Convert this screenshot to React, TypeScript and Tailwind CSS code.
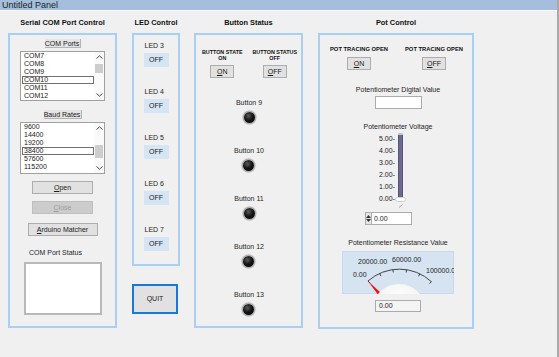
import React from "react";

function Chevron({ up }: { up?: boolean }) {
  return (
    <svg width="7" height="4" viewBox="0 0 7 4">
      <polyline
        points={up ? "0.5,3.5 3.5,0.8 6.5,3.5" : "0.5,0.5 3.5,3.2 6.5,0.5"}
        fill="none"
        stroke="#4a4a4a"
        strokeWidth="1"
      />
    </svg>
  );
}

function ListBox({
  items,
  focus,
  thumb,
  className,
}: {
  items: string[];
  focus: number;
  thumb: string;
  className: string;
}) {
  return (
    <div className={`flex bg-white border border-[#a0a0a0] ${className}`}>
      <div className="flex-1 flex flex-col pl-[1px]">
        {items.map((t, i) => (
          <div
            key={t}
            className={`h-[8px] leading-[8px] text-[7px] pl-[2px] ${
              i === focus ? "shadow-[inset_0_0_0_1px_#707070]" : ""
            }`}
          >
            {t}
          </div>
        ))}
      </div>
      <div className="w-[10px] flex flex-col items-center bg-[#fafafa]">
        <div className="h-[10px] flex items-center">
          <Chevron up />
        </div>
        <div className={`w-[8px] bg-[#cdcdcd] ${thumb}`} />
        <div className="flex-1" />
        <div className="h-[10px] flex items-center">
          <Chevron />
        </div>
      </div>
    </div>
  );
}

function Tag({ children, className }: { children: React.ReactNode; className: string }) {
  return (
    <div
      className={`h-[9px] leading-[9px] text-[7px] text-center whitespace-nowrap bg-[#e4e4e4] border-b border-r border-[#b4b4b4] ${className}`}
    >
      {children}
    </div>
  );
}

function Btn({
  children,
  className,
  disabled,
}: {
  children: React.ReactNode;
  className: string;
  disabled?: boolean;
}) {
  return (
    <div
      className={`flex items-center justify-center text-[7px] leading-none border whitespace-nowrap ${
        disabled
          ? "bg-[#cccccc] border-[#bfbfbf] text-[#9c9c9c]"
          : "bg-[#e1e1e1] border-[#adadad] text-[#1a1a1a]"
      } ${className}`}
    >
      {children}
    </div>
  );
}

function Led() {
  return (
    <div className="w-[11px] h-[11px] rounded-full bg-[radial-gradient(circle_at_40%_35%,#5a5a5a_0%,#151515_45%,#000_100%)] shadow-[0_0_1px_1.5px_#a8a8a8]" />
  );
}

function Header({ children }: { children: React.ReactNode }) {
  return (
    <div className="h-[10px] leading-[10px] text-[7.4px] font-bold text-center whitespace-nowrap text-[#111]">
      {children}
    </div>
  );
}

function Gauge() {
  const cx = 57.5;
  const cy = 65.3;
  const ticks = [-41.7, -24.9, -8.1, 8.7, 25.5, 42.6].map((d) => {
    const a = (d * Math.PI) / 180;
    return {
      x1: cx + 47.3 * Math.sin(a),
      y1: cy - 47.3 * Math.cos(a),
      x2: cx + 44.3 * Math.sin(a),
      y2: cy - 44.3 * Math.cos(a),
    };
  });
  return (
    <svg width="112" height="43" viewBox="0 0 112 43" className="block mt-[3px]">
      <defs>
        <radialGradient id="hub" cx="50%" cy="30%" r="70%">
          <stop offset="0%" stopColor="#ffffff" />
          <stop offset="100%" stopColor="#ececec" />
        </radialGradient>
      </defs>
      <rect x="0.5" y="0.5" width="111" height="42" fill="#d6e4f1" stroke="#c7d9ea" />
      <g fontFamily="Liberation Sans, Arial, sans-serif" fontSize="7" fill="#222">
        <text x="11" y="26">0.00</text>
        <text x="16" y="12.5">20000.00</text>
        <text x="50" y="11">60000.00</text>
        <text x="84" y="21.5">100000.0</text>
      </g>
      <path d="M26 30 A47.3 47.3 0 0 1 89.3 30.6" fill="none" stroke="#444" strokeWidth="1" />
      {ticks.map((t, i) => (
        <line key={i} x1={t.x1} y1={t.y1} x2={t.x2} y2={t.y2} stroke="#444" strokeWidth="1" />
      ))}
      <polygon points="25.5,29.5 38.7,41.8 36.3,44" fill="#ee1111" />
      <circle cx="57" cy="60" r="27" fill="url(#hub)" />
    </svg>
  );
}

export default function App() {
  const label = "text-[7px] leading-[10px] h-[10px] whitespace-nowrap text-[#1e1e1e]";
  return (
    <div className="w-[559px] h-[357px] bg-[#f0f0f0] overflow-hidden border-r-2 border-[#a9a9a9] font-['Liberation_Sans',Arial,sans-serif] text-[#1a1a1a]">
      <div className="h-[10px] bg-[#a4bedb] text-[9px] leading-[10px] pl-[2px] text-[#1e1e1e]">
        Untitled Panel
      </div>
      <div className="h-[1px] bg-[#f8f8f8]" />
      <div className="flex items-start pl-[8px] pt-[7px]">
        {/* Serial COM Port Control */}
        <div className="w-[109px] flex flex-col">
          <Header>Serial COM Port Control</Header>
          <div className="mt-[5px] h-[295px] border-2 border-[#a9d0f2] flex flex-col items-center">
            <Tag className="mt-[4px] w-[36px]">COM Ports</Tag>
            <ListBox
              className="mt-[3px] w-[85px] h-[50px]"
              items={["COM7", "COM8", "COM9", "COM10", "COM11", "COM12"]}
              focus={3}
              thumb="mt-[2px] h-[9px]"
            />
            <Tag className="mt-[9px] w-[38px]">Baud Rates</Tag>
            <ListBox
              className="mt-[3px] w-[85px] h-[52px]"
              items={["9600", "14400", "19200", "38400", "57600", "115200"]}
              focus={3}
              thumb="mt-[12px] h-[13px]"
            />
            <Btn className="mt-[7px] w-[61px] h-[13px]">
              <span>
                <span className="underline">O</span>pen
              </span>
            </Btn>
            <Btn className="mt-[7px] w-[61px] h-[13px]" disabled>
              <span>
                <span className="underline">C</span>lose
              </span>
            </Btn>
            <Btn className="mt-[9px] w-[70px] h-[13px]">
              <span>
                <span className="underline">A</span>rduino Matcher
              </span>
            </Btn>
            <div className={`self-start ml-[19px] mt-[12px] ${label}`}>COM Port Status</div>
            <div className="mt-[4px] w-[78px] h-[53px] bg-white border-2 border-[#b9b9b9]" />
          </div>
        </div>

        {/* LED Control */}
        <div className="ml-[15px] w-[48px] flex flex-col">
          <Header>LED Control</Header>
          <div className="mt-[5px] h-[233px] border-2 border-[#a9d0f2] flex flex-col items-center pt-[6px] gap-[20px]">
            {[3, 4, 5, 6, 7].map((n) => (
              <div key={n} className="w-[25px] flex flex-col">
                <div className={`pl-[1px] ${label}`}>LED {n}</div>
                <div className="mt-[2px] h-[14px] bg-[#d6e5f3] flex items-center justify-center text-[7px]">
                  OFF
                </div>
              </div>
            ))}
          </div>
          <div className="mt-[18px] w-[46px] h-[30px] border-2 border-[#1a79d6] bg-[#e1e1e1] flex items-center justify-center text-[7px]">
            QUIT
          </div>
        </div>

        {/* Button Status */}
        <div className="ml-[14px] w-[109px] flex flex-col">
          <Header>Button Status</Header>
          <div className="mt-[5px] h-[295px] border-2 border-[#a9d0f2] flex flex-col">
            <div className="grid grid-cols-2 mt-[15px]">
              <div className="flex flex-col items-center">
                <div className="text-[5.4px] leading-[5.5px] font-bold text-center whitespace-nowrap text-[#111]">
                  BUTTON STATE
                  <br />
                  ON
                </div>
                <Btn className="mt-[4px] w-[24px] h-[13px]">
                  <span>
                    <span className="underline">O</span>N
                  </span>
                </Btn>
              </div>
              <div className="flex flex-col items-center">
                <div className="text-[5.4px] leading-[5.5px] font-bold text-center whitespace-nowrap text-[#111]">
                  BUTTON STATUS
                  <br />
                  OFF
                </div>
                <Btn className="mt-[4px] w-[24px] h-[13px]">
                  <span>
                    <span className="underline">O</span>FF
                  </span>
                </Btn>
              </div>
            </div>
            <div className="mt-[20px] flex flex-col items-center gap-[23px] pl-[1px]">
              {[9, 10, 11, 12, 13].map((n) => (
                <div key={n} className="flex flex-col items-center">
                  <div className={label}>Button {n}</div>
                  <div className="mt-[4px]">
                    <Led />
                  </div>
                </div>
              ))}
            </div>
          </div>
        </div>

        {/* Pot Control */}
        <div className="ml-[15px] w-[156px] flex flex-col">
          <Header>Pot Control</Header>
          <div className="mt-[5px] h-[296px] border-2 border-[#a9d0f2] flex flex-col">
            <div className="grid grid-cols-2 mt-[11px]">
              <div className="flex flex-col items-center pl-[2px]">
                <div className="text-[5.8px] leading-[6px] font-bold whitespace-nowrap text-[#111]">POT TRACING OPEN</div>
                <Btn className="mt-[5px] w-[24px] h-[13px]">
                  <span>
                    <span className="underline">O</span>N
                  </span>
                </Btn>
              </div>
              <div className="flex flex-col items-center">
                <div className="text-[5.8px] leading-[6px] font-bold whitespace-nowrap text-[#111]">POT TRACING OPEN</div>
                <Btn className="mt-[5px] w-[24px] h-[13px]">
                  <span>
                    <span className="underline">O</span>FF
                  </span>
                </Btn>
              </div>
            </div>
            <div className="flex flex-col items-center pl-[4px]">
              <div className={`mt-[15px] ${label}`}>Potentiometer Digital Value</div>
              <div className="mt-[1px] w-[47px] h-[13px] bg-white border border-[#ababab]" />
              <div className={`mt-[13px] ${label}`}>Potentiometer Voltage</div>
              <div className="self-start ml-[52px] mt-[1px] flex">
                <div className="w-[19px] flex flex-col items-end">
                  {["5.00", "4.00", "3.00", "2.00", "1.00", "0.00"].map((v) => (
                    <div key={v} className="h-[12px] leading-[12px] text-[7px] text-[#222]">
                      {v}-
                    </div>
                  ))}
                </div>
                <div className="w-[11px] flex flex-col items-center">
                  <div className="h-[2px] w-[5px] bg-[#c4c4cc] rounded-t-[1px]" />
                  <div className="h-[62px] w-[5px] bg-[#6a6a8c] border-x border-[#56567a]" />
                  <div className="h-[5px] w-[11px] rounded-full bg-white border border-[#cfcfcf]" />
                  <svg width="6" height="4" viewBox="0 0 6 4" className="mt-[2px]">
                    <line x1="1" y1="3.5" x2="4.5" y2="0.5" stroke="#a8a8a8" strokeWidth="1" />
                  </svg>
                </div>
              </div>
              <div className="self-start ml-[41px] mt-[4px] flex h-[13px]">
                <div className="w-[7px] h-[13px] flex flex-col items-center justify-center gap-[1px] bg-[#e6e6e6] border border-[#adadad]">
                  <svg width="5" height="3" viewBox="0 0 5 3">
                    <polygon points="0,3 2.5,0 5,3" fill="#333" />
                  </svg>
                  <svg width="5" height="3" viewBox="0 0 5 3">
                    <polygon points="0,0 2.5,3 5,0" fill="#333" />
                  </svg>
                </div>
                <div className="w-[40px] h-[13px] bg-white border border-[#ababab] border-l-0 text-[7px] leading-[11px] pl-[2px]">
                  0.00
                </div>
              </div>
              <div className={`mt-[13px] ${label}`}>Potentiometer Resistance Value</div>
              <Gauge />
              <div className="mt-[6px] w-[46px] h-[12px] bg-[#f4f4f4] border border-[#ababab] text-[7px] leading-[10px] pl-[3px]">
                0.00
              </div>
            </div>
          </div>
        </div>
      </div>
    </div>
  );
}
